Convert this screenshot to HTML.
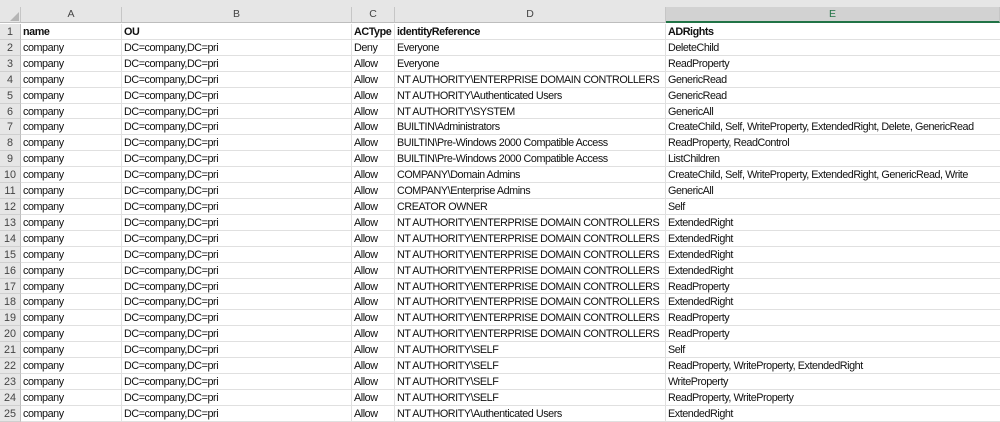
<!DOCTYPE html>
<html><head><meta charset="utf-8"><style>
body{margin:0;width:1000px;height:422px;overflow:hidden;background:#fff;font-family:"Liberation Sans",Arial,sans-serif;font-size:10.8px;letter-spacing:-0.45px;color:#111}
.top{position:absolute;left:0;top:0;width:1000px;height:7px;background:#e6e6e6}
.hdr{position:absolute;top:7px;height:16px;background:#e6e6e6;border-right:1px solid #c6c6c6;border-bottom:1px solid #bdbdbd;box-sizing:border-box;text-align:center;line-height:15px;color:#444;font-size:10.5px;letter-spacing:0}
.hdr.sel{background:#d2d2d2;border-bottom:2px solid #217346;color:#217346}
.rows{position:absolute;top:24px;left:0;width:1000px}
.r{height:15.92px;position:relative;white-space:nowrap}
.r div{position:absolute;top:0;height:15.92px;border-right:1px solid #e0e0e0;border-bottom:1px solid #e0e0e0;box-sizing:border-box;line-height:16px;padding-left:2px;overflow:hidden}
.r .n{left:0;width:21px;background:#e6e6e6;border-right:1px solid #bdbdbd;border-bottom:1px solid #cfcfcf;color:#444;text-align:center;padding:0;letter-spacing:0}
.r .a{left:21px;width:101px}
.r .b{left:122px;width:230px}
.r .c{left:352px;width:43px}
.r .d{left:395px;width:271px}
.r .e{left:666px;width:334px;border-right:none}
.r.h div{font-weight:bold}
.r.h .n{font-weight:normal}
</style></head><body>
<div class="top"></div>
<div class="hdr" style="left:0;width:21px"></div>
<svg style="position:absolute;left:10px;top:12px" width="9" height="9"><polygon points="9,0 9,9 0,9" fill="#b5b5b5"/></svg>
<div class="hdr" style="left:21px;width:101px">A</div>
<div class="hdr" style="left:122px;width:230px">B</div>
<div class="hdr" style="left:352px;width:43px">C</div>
<div class="hdr" style="left:395px;width:271px">D</div>
<div class="hdr sel" style="left:666px;width:334px">E</div>
<div class="rows">
<div class="r h"><div class="n">1</div><div class="a">name</div><div class="b">OU</div><div class="c">ACType</div><div class="d">identityReference</div><div class="e">ADRights</div></div>
<div class="r"><div class="n">2</div><div class="a">company</div><div class="b">DC=company,DC=pri</div><div class="c">Deny</div><div class="d">Everyone</div><div class="e">DeleteChild</div></div>
<div class="r"><div class="n">3</div><div class="a">company</div><div class="b">DC=company,DC=pri</div><div class="c">Allow</div><div class="d">Everyone</div><div class="e">ReadProperty</div></div>
<div class="r"><div class="n">4</div><div class="a">company</div><div class="b">DC=company,DC=pri</div><div class="c">Allow</div><div class="d">NT AUTHORITY\ENTERPRISE DOMAIN CONTROLLERS</div><div class="e">GenericRead</div></div>
<div class="r"><div class="n">5</div><div class="a">company</div><div class="b">DC=company,DC=pri</div><div class="c">Allow</div><div class="d">NT AUTHORITY\Authenticated Users</div><div class="e">GenericRead</div></div>
<div class="r"><div class="n">6</div><div class="a">company</div><div class="b">DC=company,DC=pri</div><div class="c">Allow</div><div class="d">NT AUTHORITY\SYSTEM</div><div class="e">GenericAll</div></div>
<div class="r"><div class="n">7</div><div class="a">company</div><div class="b">DC=company,DC=pri</div><div class="c">Allow</div><div class="d">BUILTIN\Administrators</div><div class="e">CreateChild, Self, WriteProperty, ExtendedRight, Delete, GenericRead</div></div>
<div class="r"><div class="n">8</div><div class="a">company</div><div class="b">DC=company,DC=pri</div><div class="c">Allow</div><div class="d">BUILTIN\Pre-Windows 2000 Compatible Access</div><div class="e">ReadProperty, ReadControl</div></div>
<div class="r"><div class="n">9</div><div class="a">company</div><div class="b">DC=company,DC=pri</div><div class="c">Allow</div><div class="d">BUILTIN\Pre-Windows 2000 Compatible Access</div><div class="e">ListChildren</div></div>
<div class="r"><div class="n">10</div><div class="a">company</div><div class="b">DC=company,DC=pri</div><div class="c">Allow</div><div class="d">COMPANY\Domain Admins</div><div class="e">CreateChild, Self, WriteProperty, ExtendedRight, GenericRead, Write</div></div>
<div class="r"><div class="n">11</div><div class="a">company</div><div class="b">DC=company,DC=pri</div><div class="c">Allow</div><div class="d">COMPANY\Enterprise Admins</div><div class="e">GenericAll</div></div>
<div class="r"><div class="n">12</div><div class="a">company</div><div class="b">DC=company,DC=pri</div><div class="c">Allow</div><div class="d">CREATOR OWNER</div><div class="e">Self</div></div>
<div class="r"><div class="n">13</div><div class="a">company</div><div class="b">DC=company,DC=pri</div><div class="c">Allow</div><div class="d">NT AUTHORITY\ENTERPRISE DOMAIN CONTROLLERS</div><div class="e">ExtendedRight</div></div>
<div class="r"><div class="n">14</div><div class="a">company</div><div class="b">DC=company,DC=pri</div><div class="c">Allow</div><div class="d">NT AUTHORITY\ENTERPRISE DOMAIN CONTROLLERS</div><div class="e">ExtendedRight</div></div>
<div class="r"><div class="n">15</div><div class="a">company</div><div class="b">DC=company,DC=pri</div><div class="c">Allow</div><div class="d">NT AUTHORITY\ENTERPRISE DOMAIN CONTROLLERS</div><div class="e">ExtendedRight</div></div>
<div class="r"><div class="n">16</div><div class="a">company</div><div class="b">DC=company,DC=pri</div><div class="c">Allow</div><div class="d">NT AUTHORITY\ENTERPRISE DOMAIN CONTROLLERS</div><div class="e">ExtendedRight</div></div>
<div class="r"><div class="n">17</div><div class="a">company</div><div class="b">DC=company,DC=pri</div><div class="c">Allow</div><div class="d">NT AUTHORITY\ENTERPRISE DOMAIN CONTROLLERS</div><div class="e">ReadProperty</div></div>
<div class="r"><div class="n">18</div><div class="a">company</div><div class="b">DC=company,DC=pri</div><div class="c">Allow</div><div class="d">NT AUTHORITY\ENTERPRISE DOMAIN CONTROLLERS</div><div class="e">ExtendedRight</div></div>
<div class="r"><div class="n">19</div><div class="a">company</div><div class="b">DC=company,DC=pri</div><div class="c">Allow</div><div class="d">NT AUTHORITY\ENTERPRISE DOMAIN CONTROLLERS</div><div class="e">ReadProperty</div></div>
<div class="r"><div class="n">20</div><div class="a">company</div><div class="b">DC=company,DC=pri</div><div class="c">Allow</div><div class="d">NT AUTHORITY\ENTERPRISE DOMAIN CONTROLLERS</div><div class="e">ReadProperty</div></div>
<div class="r"><div class="n">21</div><div class="a">company</div><div class="b">DC=company,DC=pri</div><div class="c">Allow</div><div class="d">NT AUTHORITY\SELF</div><div class="e">Self</div></div>
<div class="r"><div class="n">22</div><div class="a">company</div><div class="b">DC=company,DC=pri</div><div class="c">Allow</div><div class="d">NT AUTHORITY\SELF</div><div class="e">ReadProperty, WriteProperty, ExtendedRight</div></div>
<div class="r"><div class="n">23</div><div class="a">company</div><div class="b">DC=company,DC=pri</div><div class="c">Allow</div><div class="d">NT AUTHORITY\SELF</div><div class="e">WriteProperty</div></div>
<div class="r"><div class="n">24</div><div class="a">company</div><div class="b">DC=company,DC=pri</div><div class="c">Allow</div><div class="d">NT AUTHORITY\SELF</div><div class="e">ReadProperty, WriteProperty</div></div>
<div class="r"><div class="n">25</div><div class="a">company</div><div class="b">DC=company,DC=pri</div><div class="c">Allow</div><div class="d">NT AUTHORITY\Authenticated Users</div><div class="e">ExtendedRight</div></div>
</div>
</body></html>
